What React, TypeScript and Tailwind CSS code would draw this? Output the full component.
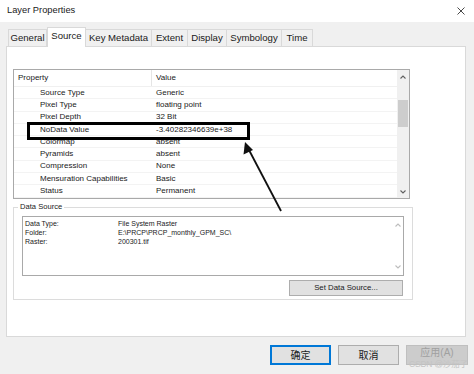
import React from 'react';

const rows: [string, string][] = [
  ['Source Type', 'Generic'],
  ['Pixel Type', 'floating point'],
  ['Pixel Depth', '32 Bit'],
  ['NoData Value', '-3.40282346639e+38'],
  ['Colormap', 'absent'],
  ['Pyramids', 'absent'],
  ['Compression', 'None'],
  ['Mensuration Capabilities', 'Basic'],
  ['Status', 'Permanent'],
];

const tabs = [
  { label: 'General', w: 'w-[39px]' },
  { label: 'Source', w: 'w-[39px]', active: true },
  { label: 'Key Metadata', w: 'w-[66px]' },
  { label: 'Extent', w: 'w-[36px]' },
  { label: 'Display', w: 'w-[39px]' },
  { label: 'Symbology', w: 'w-[55px]' },
  { label: 'Time', w: 'w-[31px]' },
];

const dataSource: [string, string][] = [
  ['Data Type:', 'File System Raster'],
  ['Folder:', 'E:\\PRCP\\PRCP_monthly_GPM_SC\\'],
  ['Raster:', '200301.tif'],
];

function Chevron({ up, color = '#606060' }: { up?: boolean; color?: string }) {
  return (
    <svg width="6" height="4" viewBox="0 0 6 4">
      <polyline
        points={up ? '0.5,3.5 3,1 5.5,3.5' : '0.5,0.5 3,3 5.5,0.5'}
        fill="none"
        stroke={color}
        strokeWidth="1.1"
      />
    </svg>
  );
}

export default function App() {
  return (
    <div className="relative w-[474px] h-[374px] overflow-hidden bg-[#f0f0f0] font-['Liberation_Sans','Noto_Sans_CJK_SC',sans-serif] text-[#1a1a1a]">
      {/* title bar */}
      <div className="h-[22px] bg-white flex items-center justify-between pl-[7px] pr-[9px]">
        <span className="text-[9.3px]">Layer Properties</span>
        <svg width="8" height="8" viewBox="0 0 8 8">
          <path d="M0.5 0.5 L7.5 7.5 M7.5 0.5 L0.5 7.5" stroke="#333" strokeWidth="0.9" />
        </svg>
      </div>

      <div className="pl-[6px]">
        {/* tabs */}
        <div className="h-[24px] flex items-end pl-[2px]">
          {tabs.map((t) =>
            t.active ? (
              <div
                key={t.label}
                className={`${t.w} h-[20px] -mb-px relative z-10 bg-white border border-b-0 border-[#d9d9d9] flex items-center justify-center text-[9.6px] pb-[2px]`}
              >
                {t.label}
              </div>
            ) : (
              <div
                key={t.label}
                className={`${t.w} h-[17px] bg-[#f0f0f0] border-t border-r first:border-l border-[#d9d9d9] flex items-center justify-center text-[9.6px]`}
              >
                {t.label}
              </div>
            )
          )}
        </div>

        {/* tab panel */}
        <div className="w-[460px] h-[291px] bg-white border border-[#d9d9d9] pt-[22px] pl-[6px]">
          {/* property list */}
          <div className="w-[397px] h-[130px] border border-[#a9a9a9] flex">
            <div className="flex-1 flex flex-col text-[8px]">
              <div className="h-[17px] flex items-center border-b border-[#f0f0f0]">
                <div className="w-[138px] pl-[4px] border-r border-[#e5e5e5] h-full flex items-center">Property</div>
                <div className="pl-[4px]">Value</div>
              </div>
              {rows.map(([k, v]) => (
                <div key={k} className="h-[12.3px] flex items-center border-b border-[#f3f3f3]">
                  <div className="w-[138px] pl-[26px]">{k}</div>
                  <div className="pl-[4px]">{v}</div>
                </div>
              ))}
            </div>
            <div className="w-[12px] bg-[#f0f0f0] flex flex-col items-center">
              <div className="h-[12px] flex items-center pt-[2px]">
                <Chevron up />
              </div>
              <div className="mt-[18px] w-[10px] h-[27px] bg-[#cdcdcd]" />
              <div className="flex-1" />
              <div className="h-[12px] flex items-center">
                <Chevron />
              </div>
            </div>
          </div>

          {/* data source group */}
          <fieldset className="mt-[3px] w-[397px] h-[98px] border border-[#dcdcdc] px-[8px]">
            <legend className="ml-[-4px] px-[2px] text-[7.6px] leading-[10px]">Data Source</legend>
            <div className="mt-[4px] w-[382px] h-[60px] border border-[#a9a9a9] flex">
              <div className="flex-1 pt-[2px] pl-[2px] text-[7px] leading-[9px]">
                {dataSource.map(([k, v]) => (
                  <div key={k} className="flex">
                    <div className="w-[93px]">{k}</div>
                    <div>{v}</div>
                  </div>
                ))}
              </div>
              <div className="w-[11px] flex flex-col items-center justify-between py-[6px]">
                <Chevron up color="#bdbdbd" />
                <Chevron color="#bdbdbd" />
              </div>
            </div>
            <div className="mt-[4px] flex justify-end pr-[1px]">
              <div className="w-[114px] h-[16px] bg-[#e1e1e1] border border-[#adadad] flex items-center justify-center text-[7.8px]">
                Set Data Source...
              </div>
            </div>
          </fieldset>
        </div>
      </div>

      {/* dialog buttons */}
      <div className="mt-[8px] flex justify-end gap-[7px] pr-[6px]">
        <div className="w-[61px] h-[20px] bg-[#e1e1e1] border-2 border-[#0078d7] flex items-center justify-center text-[10px]">
          确定
        </div>
        <div className="w-[61px] h-[20px] bg-[#e1e1e1] border border-[#adadad] flex items-center justify-center text-[10px]">
          取消
        </div>
        <div className="w-[62px] h-[20px] bg-[#cccccc] border border-[#bfbfbf] flex items-start justify-center pt-[1px] text-[10px] leading-[12px] text-[#a0a0a0]">
          应用(A)
        </div>
      </div>

      {/* annotation: highlight box */}
      <div className="absolute left-[27px] top-[122px] w-[223px] h-[18px] border-[3px] border-black" />
      {/* annotation: arrow */}
      <svg className="absolute left-0 top-0" width="474" height="374" viewBox="0 0 474 374">
        <line x1="281" y1="211" x2="249" y2="150" stroke="#111" strokeWidth="1.8" />
        <polygon points="245,142 243.5,154.5 253,150" fill="#111" />
      </svg>

      {/* watermark */}
      <div className="absolute left-[409px] top-[359px] text-[8.5px] leading-[10px] text-[#c4c4c4] tracking-[-0.2px]">
        CSDN @沙茄子
      </div>
    </div>
  );
}
